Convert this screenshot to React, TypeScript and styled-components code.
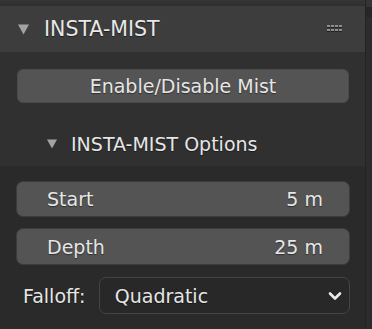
import React from "react";
import styled, { createGlobalStyle } from "styled-components";

const Global = createGlobalStyle`
  html, body { margin: 0; padding: 0; background: #2b2b2b; }
  body { font-family: "DejaVu Sans", "Liberation Sans", sans-serif; }
  * { box-sizing: border-box; }
`;

const Frame = styled.div`
  width: 372px;
  height: 329px;
  display: flex;
  overflow: hidden;
  background: #2b2b2b;
`;

const MainColumn = styled.div`
  width: 365px;
  display: flex;
  flex-direction: column;
`;

const TopGap = styled.div`
  height: 6px;
  background: linear-gradient(180deg, #363636, #2f2f2f);
`;

const SideStrip = styled.div`
  width: 7px;
  display: flex;
  flex-direction: column;
  border-left: 1px solid #232323;
  background: #2c2c2c;
`;

const SideTop = styled.div`
  height: 7px;
  background: #343434;
`;

const SideThumb = styled.div`
  height: 10px;
  background: #262626;
`;

const Header = styled.div`
  height: 46px;
  background: #3d3d3d;
  display: flex;
  align-items: center;
  padding-left: 18px;
  padding-right: 22px;
  color: #e8e8e8;
  font-size: 20.5px;
  text-shadow: 0 1px 1px rgba(0, 0, 0, 0.5);
`;

const Tri = styled.svg<{ $gap: number }>`
  flex: none;
  margin-right: ${(p) => p.$gap}px;
`;

const HeaderTitle = styled.span`
  flex: 1;
`;

const Body = styled.div`
  background: #303030;
  padding: 17px 16px 0 17px;
  display: flex;
  flex-direction: column;
`;

const WideButton = styled.div`
  height: 34px;
  width: 332px;
  border-radius: 6px;
  background: #545454;
  border: 1px solid #4a4a4a;
  display: flex;
  align-items: center;
  justify-content: center;
  color: #e6e6e6;
  font-size: 19px;
  text-shadow: 0 1px 1px rgba(0, 0, 0, 0.45);
`;

const SubHeader = styled.div`
  height: 63px;
  display: flex;
  align-items: center;
  padding-left: 30px;
  padding-top: 18px;
  color: #e6e6e6;
  font-size: 19px;
  text-shadow: 0 1px 1px rgba(0, 0, 0, 0.45);
`;

const SubBody = styled.div`
  flex: 1;
  background: #2a2a2a;
  padding: 15px 15px 15px 16px;
  display: flex;
  flex-direction: column;
  gap: 11px;
`;

const NumField = styled.div<{ $h: number }>`
  height: ${(p) => p.$h}px;
  width: 334px;
  border-radius: 7px;
  background: #545454;
  border: 1px solid #3c3c3c;
  display: flex;
  align-items: center;
  justify-content: space-between;
  padding: 0 26px 0 30px;
  color: #e6e6e6;
  font-size: 19px;
  text-shadow: 0 1px 1px rgba(0, 0, 0, 0.45);
`;

const Row = styled.div`
  display: flex;
  align-items: center;
  margin-top: 1px;
  height: 37px;
`;

const RowLabel = styled.span`
  width: 83px;
  padding-left: 7px;
  color: #e6e6e6;
  font-size: 19px;
  text-shadow: 0 1px 1px rgba(0, 0, 0, 0.45);
`;

const Dropdown = styled.div`
  width: 252px;
  height: 37px;
  border-radius: 7px;
  background: #282828;
  border: 1px solid #444444;
  display: flex;
  align-items: center;
  justify-content: space-between;
  padding: 0 7px 0 15px;
  color: #e6e6e6;
  font-size: 19px;
  text-shadow: 0 1px 1px rgba(0, 0, 0, 0.45);
`;

const Grip = () => (
  <svg width="16" height="9" viewBox="0 0 16 9">
    {[0, 4, 8, 12].map((x) =>
      [0, 4].map((y) => (
        <g key={`${x}-${y}`}>
          <rect x={x} y={y + 1} width="3" height="2" fill="#1e1e1e" />
          <rect x={x} y={y} width="3" height="2" fill="#8f8f8f" />
        </g>
      ))
    )}
  </svg>
);

const Triangle = ({ gap, size }: { gap: number; size: number }) => (
  <Tri $gap={gap} width={size} height={size} viewBox="0 0 10 10">
    <polygon points="0,0.5 10,0.5 5,9.5" fill="#a3a3a3" />
  </Tri>
);

const Chevron = () => (
  <svg width="14" height="10" viewBox="0 0 14 10">
    <polyline
      points="2,2.5 7,7.5 12,2.5"
      fill="none"
      stroke="#ececec"
      strokeWidth="2.6"
      strokeLinecap="round"
      strokeLinejoin="round"
    />
  </svg>
);

export default function App() {
  return (
    <>
      <Global />
      <Frame>
        <MainColumn>
          <TopGap />
          <Header>
            <Triangle gap={15} size={11} />
            <HeaderTitle>INSTA-MIST</HeaderTitle>
            <Grip />
          </Header>
          <Body>
            <WideButton>Enable/Disable Mist</WideButton>
            <SubHeader>
              <Triangle gap={14} size={10} />
              <span>INSTA-MIST Options</span>
            </SubHeader>
          </Body>
          <SubBody>
            <NumField $h={36}>
              <span>Start</span>
              <span>5 m</span>
            </NumField>
            <NumField $h={37}>
              <span>Depth</span>
              <span>25 m</span>
            </NumField>
            <Row>
              <RowLabel>Falloff:</RowLabel>
              <Dropdown>
                <span>Quadratic</span>
                <Chevron />
              </Dropdown>
            </Row>
          </SubBody>
        </MainColumn>
        <SideStrip>
          <SideTop />
          <SideThumb />
        </SideStrip>
      </Frame>
    </>
  );
}
